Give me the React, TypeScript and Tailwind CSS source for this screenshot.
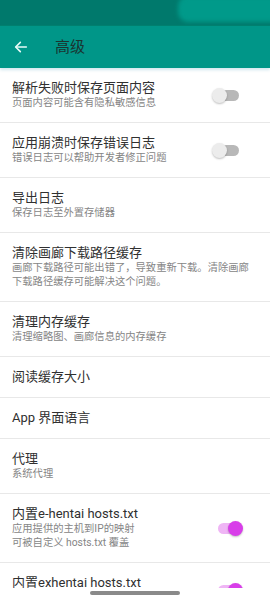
import React from 'react';

type Row = {
    title: string;
    sub?: string[];
    toggle?: 'on' | 'off';
};

const rows: Row[] = [
    { title: "解析失败时保存页面内容", sub: ["页面内容可能含有隐私敏感信息"], toggle: "off" },
    { title: "应用崩溃时保存错误日志", sub: ["错误日志可以帮助开发者修正问题"], toggle: "off" },
    { title: "导出日志", sub: ["保存日志至外置存储器"] },
    { title: "清除画廊下载路径缓存", sub: ["画廊下载路径可能出错了，导致重新下载。清除画廊下载路径缓存可能解决这个问题。"] },
    { title: "清理内存缓存", sub: ["清理缩略图、画廊信息的内存缓存"] },
    { title: "阅读缓存大小" },
    { title: "App 界面语言" },
    { title: "代理", sub: ["系统代理"] },
    { title: "内置e-hentai hosts.txt", sub: ["应用提供的主机到IP的映射", "可被自定义 hosts.txt 覆盖"], toggle: "on" },
    { title: "内置exhentai hosts.txt", sub: ["应用提供的主机到IP的映射"], toggle: "on" },
];

const Switch: React.FC<{ on: boolean }> = ({ on }) => {
    if (on) {
        return (
            <div className="relative w-[31px] h-[15px] flex items-center shrink-0">
                <div className="absolute left-[6px] right-[4px] h-[11px] rounded-full bg-[#efb5f5]" />
                <div className="absolute right-0 w-[15px] h-[15px] rounded-full bg-[#d83ee9] shadow-[0_1px_2px_rgba(0,0,0,0.25)]" />
            </div>
        );
    }
    return (
        <div className="relative w-[31px] h-[15px] flex items-center shrink-0">
            <div className="absolute left-[6px] right-[4px] h-[11px] rounded-full bg-[#b8b8b8]" />
            <div className="absolute left-0 w-[15px] h-[15px] rounded-full bg-[#ececec] shadow-[0_1px_2px_rgba(0,0,0,0.25)]" />
        </div>
    );
};

export default function App() {
    return (
        <div className="relative w-[270px] h-[600px] overflow-hidden bg-white" style={{ fontFamily: 'Roboto, "Noto Sans CJK SC", sans-serif' }}>
            <div className="relative h-[25px] bg-[#00796c] overflow-hidden">
                <div className="absolute left-[178px] top-[-4px] w-[110px] h-[26px] rounded-[10px] bg-[#009a8a] blur-[2px]" />
            </div>
            <div className="relative z-10 h-[43px] bg-[#009688] border-t border-[#00806f] flex items-center shadow-[0_2px_3px_rgba(0,120,160,0.18)]">
                <svg className="ml-[13px] w-[16px] h-[16px]" viewBox="0 0 24 24" fill="none" stroke="#e8fbf8" strokeWidth="2.4" strokeLinecap="round" strokeLinejoin="round">
                    <path d="M20 12H5" />
                    <path d="M11 5l-7 7 7 7" />
                </svg>
                <span className="ml-[26px] text-[15px] text-[#1b3430] leading-none">高级</span>
            </div>
            <div className="flex flex-col">
                {rows.map((r, i) => (
                    <div key={i} className={`flex items-center border-b border-[#e8e8e8] pl-[12px] py-[12px] ${r.toggle ? 'pr-[27px]' : 'pr-[12px]'}`}>
                        <div className="flex-1 min-w-0">
                            <div className="text-[13px] leading-[16px] text-[#303030]">{r.title}</div>
                            {r.sub && r.sub.map((s, j) => (
                                <div key={j} className="text-[10.3px] leading-[14px] text-[#858585]">{s}</div>
                            ))}
                        </div>
                        {r.toggle && <Switch on={r.toggle === 'on'} />}
                    </div>
                ))}
            </div>
            <div className="absolute left-0 right-0 bottom-0 h-[12px] bg-white flex justify-center pt-[3px]">
                <div className="w-[90px] h-[3.5px] rounded-full bg-[#8a8a8a]" />
            </div>
        </div>
    );
}
